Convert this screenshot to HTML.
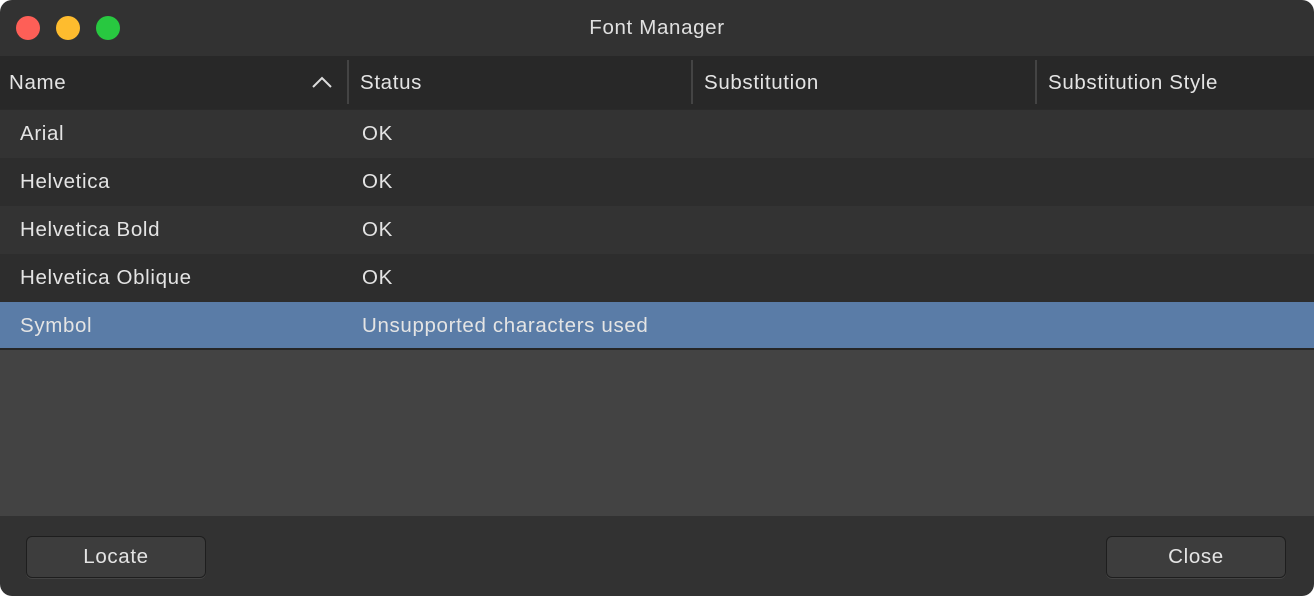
<!DOCTYPE html>
<html><head><style>
body{margin:0;background:#fff;width:1314px;height:596px;overflow:hidden;font-family:"Liberation Sans",sans-serif;}
.win{position:absolute;left:0;top:0;width:1314px;height:596px;background:#323232;border-radius:12px;overflow:hidden;color:#e4e4e4;font-size:20.5px;letter-spacing:0.65px;}
.title{position:absolute;top:0;left:0;right:0;height:56px;text-align:center;line-height:56px;color:#e0e0e0}
.dot{position:absolute;top:16px;width:24px;height:24px;border-radius:50%}
.hdr{position:absolute;top:56px;left:0;right:0;height:53px;background:#282828;border-bottom:1px solid #2a2a2a}
.hdr span{position:absolute;top:0;line-height:53px}
.sep{position:absolute;top:4px;width:2px;height:44px;background:#444}
.row{position:absolute;left:0;right:0;height:48px;line-height:48px}
.row span{position:absolute}
.btn{position:absolute;top:536px;width:178px;height:40px;border:1px solid #1e1e1e;border-radius:6px;background:#3d3d3d;text-align:center;line-height:40px;color:#e4e4e4;box-shadow:0 1px 0 #444}
</style></head><body>
<div class="win">
<div class="title">Font Manager</div>
<div class="dot" style="left:16px;background:#fe5f57"></div>
<div class="dot" style="left:56px;background:#febc2e"></div>
<div class="dot" style="left:96px;background:#28c840"></div>
<div class="hdr">
<span style="left:9px">Name</span>
<svg style="position:absolute;left:311px;top:19px" width="22" height="14"><path d="M2 12 L11 3 L20 12" stroke="#ddd" stroke-width="2" fill="none"/></svg>
<div class="sep" style="left:347px"></div><span style="left:360px">Status</span>
<div class="sep" style="left:691px"></div><span style="left:704px">Substitution</span>
<div class="sep" style="left:1035px"></div><span style="left:1048px">Substitution Style</span>
</div>
<div class="row" style="top:110px;background:#333"><span style="left:20px">Arial</span><span style="left:362px">OK</span></div>
<div class="row" style="top:158px;background:#2d2d2d"><span style="left:20px">Helvetica</span><span style="left:362px">OK</span></div>
<div class="row" style="top:206px;background:#333"><span style="left:20px">Helvetica Bold</span><span style="left:362px">OK</span></div>
<div class="row" style="top:254px;background:#2d2d2d"><span style="left:20px">Helvetica Oblique</span><span style="left:362px">OK</span></div>
<div class="row" style="top:302px;height:46px;line-height:48px;background:#5a7ca7;border-bottom:2px solid #262626"><span style="left:20px">Symbol</span><span style="left:362px">Unsupported characters used</span></div>
<div style="position:absolute;top:350px;left:0;right:0;height:166px;background:#434343"></div>
<div class="btn" style="left:26px">Locate</div>
<div class="btn" style="left:1106px">Close</div>
</div>
</body></html>
